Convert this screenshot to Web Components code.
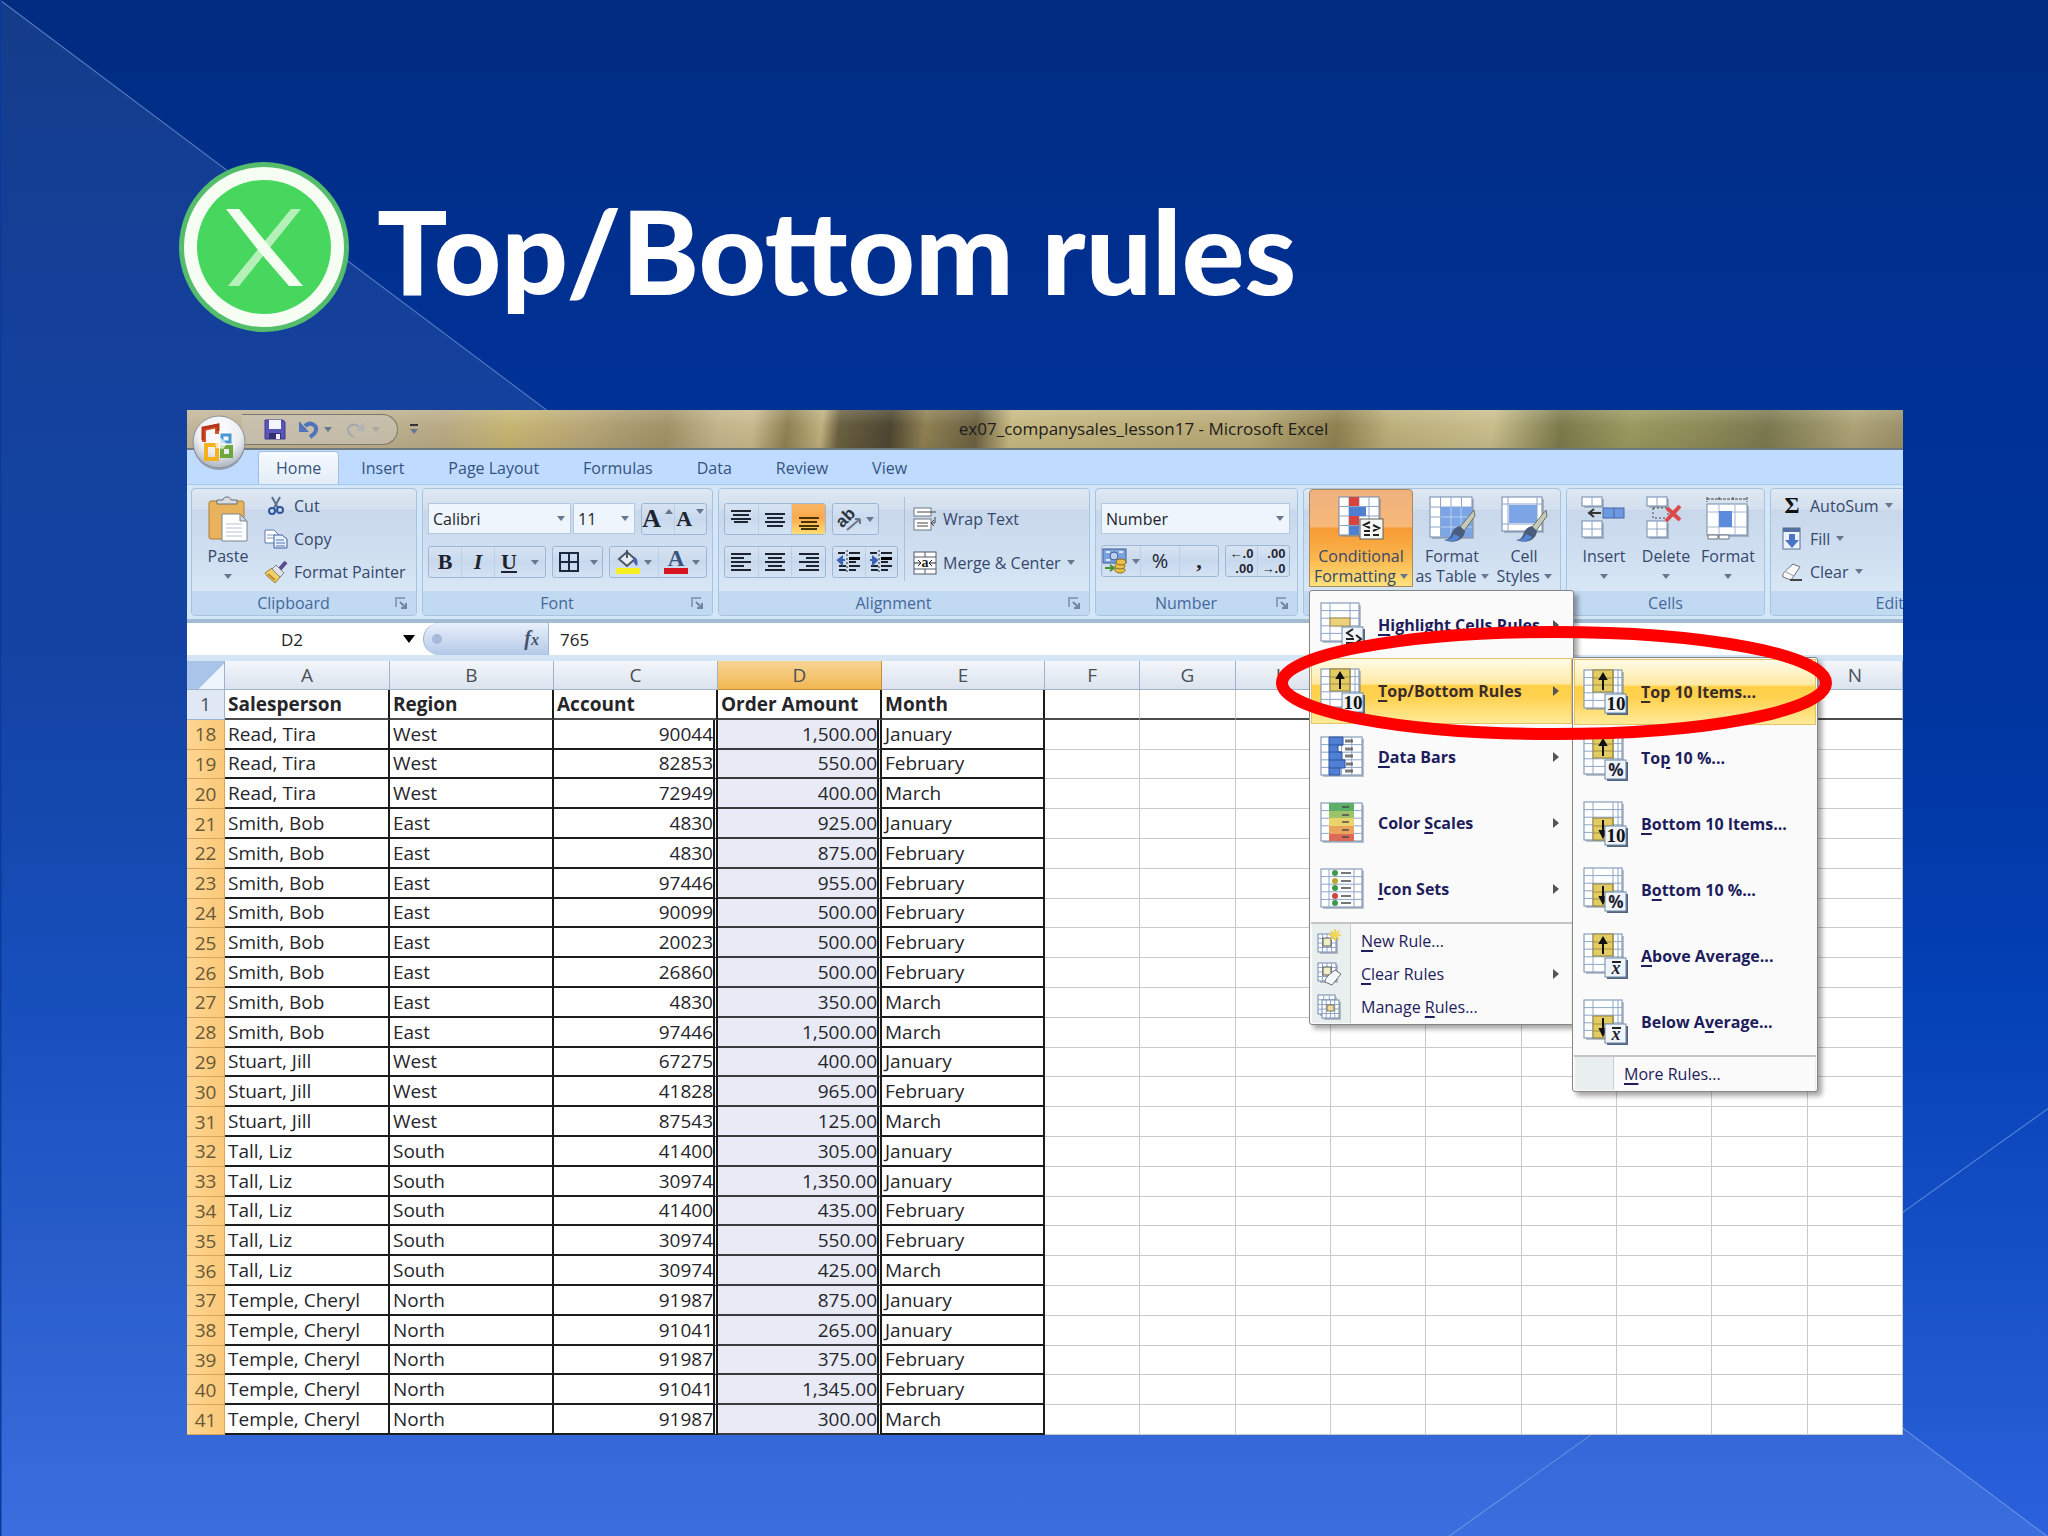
<!DOCTYPE html>
<html lang="en">
<head>
<meta charset="utf-8">
<title>Top/Bottom rules</title>
<style>
body{
  margin: 0;
  min-height: 100vh;
  display: flex;
  font-family: "Open Sans", "Noto Sans", sans-serif;
  font-size: 16px;
  line-height: 20px;
}
</style>
</head>
<body>
<slide-page>
  <slide-title slot="title">Top/Bottom rules</slide-title>
  <excel-window>
    <title-bar slot="bar">ex07_companysales_lesson17 - Microsoft Excel</title-bar>
    <ribbon-tabs slot="bar"></ribbon-tabs>
    <excel-ribbon slot="ribbon"></excel-ribbon>
    <formula-bar slot="sheet" cell="D2" value="765"></formula-bar>
    <sheet-grid slot="sheet"></sheet-grid>
    <red-ring slot="over"></red-ring>
  </excel-window>
</slide-page>

<script>
// small helper, every element below has its own template string
function define(name, html, setup){
  const template = document.createElement('template');
  template.innerHTML = html;
  customElements.define(name, class extends HTMLElement {
    connectedCallback(){
      if (this.shadowRoot) return;
      const shadow = this.attachShadow({mode: 'open'});
      shadow.append(template.content.cloneNode(true));
      if (setup) setup(this, shadow);
    }
  });
}

/* ---------- icons ---------- */
function grid(x, y, w, h, cols, rows, fill){
  let d = '';
  for (let i = 1; i < cols; i++) d += `M${x + w * i / cols} ${y}v${h}`;
  for (let i = 1; i < rows; i++) d += `M${x} ${y + h * i / rows}h${w}`;
  return `<rect x="${x + 2}" y="${y + 2}" width="${w}" height="${h}" fill="#7c8796" opacity=".5"/>
    <rect x="${x}" y="${y}" width="${w}" height="${h}" fill="${fill || '#fff'}" stroke="#7089ad"/>
    <path d="${d}" stroke="#8ea6c8" fill="none"/>`;
}
function badge(inner){
  return `<rect x="24" y="27" width="21" height="19" fill="#52637c"/><rect x="22" y="25" width="21" height="19" fill="#eef4fa" stroke="#6d88a8"/>${inner}`;
}
const badges = {
  ten: badge('<text x="33" y="41" font-size="19" font-weight="700" text-anchor="middle" font-family="Liberation Serif" fill="#111">10</text>'),
  pct: badge('<text x="33" y="41" font-size="17" font-weight="700" text-anchor="middle" font-family="Open Sans" fill="#223">%</text>'),
  avg: badge('<path d="M29 29h9" stroke="#222" stroke-width="2"/><text x="33" y="41" font-size="18" font-style="italic" font-weight="700" text-anchor="middle" font-family="Liberation Serif" fill="#223">x</text>'),
  cmp: badge('<path d="M33 27l-6 4 6 4M26 37h8M26 41h8M36 33l5 4-5 4" stroke="#222" stroke-width="2" fill="none"/>')
};
function ruleIcon(up, b){
  const y = up ? 1 : 17;
  return grid(1, 1, 38, 38, 1, 5) + `<path d="M10 1v38M30 1v38M35 1v38" stroke="#8ea6c8"/><rect x="10" y="${y}" width="20" height="22" fill="#e3cc62" stroke="#8d8043"/>
    <path d="M10 ${y + 8}h20M10 ${y + 15}h20M30 ${y}v22" stroke="#a08f45"/>
    <path d="${up ? 'M20 21V6M17 10l3-5 3 5z' : 'M20 19v14M17 30l3 6 3-6z'}" stroke="#111" stroke-width="2" fill="#111"/>` + badges[b];
}
const brush = '<path d="M45 14L31 31l4 4L46 20z" fill="#c6cbb8" stroke="#69706a"/><path d="M31 30c-6 1-8 6-9 9-1 3-4 5-7 5 9 4 20 1 21-9z" fill="#4b5d7d"/><path d="M16 44c5 0 8-3 9-6l6 3c-4 5-10 5-15 3z" fill="#5485d8"/>';
const lines = (a) => a.map(x => `M${x[0]} ${x[1]}h${x[2]}`).join('');
const ICONS = {
  office: [56, 56, `<defs><radialGradient id="g" cx=".5" cy=".3" r=".7"><stop offset="0" stop-color="#fff"/><stop offset=".6" stop-color="#eceef2"/><stop offset="1" stop-color="#aab3c2"/></radialGradient></defs>
    <circle cx="28" cy="29" r="26" fill="#6d6a60" opacity=".5"/><circle cx="28" cy="27" r="26" fill="url(#g)" stroke="#8c8f96"/>
    <g fill="none" stroke-width="4"><path d="M13 27V14l13-3v8" stroke="#d4542a"/><path d="M12 25V13l15-3v6" stroke="#b5351e" stroke-width="3"/><rect x="31" y="20" width="8" height="7" stroke="#4a97d6" stroke-width="3"/><rect x="15" y="30" width="11" height="14" stroke="#f2b21c"/><rect x="31" y="32" width="9" height="9" stroke="#6ca83c"/></g>
    <path d="M24 26l6-3 6 6-4 5-7-1z" fill="#fff" opacity=".7"/>`],
  save: [22, 21, '<path d="M1 1h18l2 2v17H1z" fill="#5a55b8" stroke="#3d3893"/><rect x="5" y="1" width="12" height="9" fill="#f4f5fd"/><rect x="5" y="14" width="12" height="6" fill="#33306f"/><rect x="12" y="15" width="4" height="5" fill="#f0f0fa"/>'],
  undo: [20, 20, '<path d="M7 7c5-5 12-1 11 4 0 3-3 5-6 7" fill="none" stroke="#4f74bb" stroke-width="4"/><path d="M1 2v11h10z" fill="#4f74bb"/>'],
  redo: [20, 20, '<path d="M13 8C8 3 1 7 2 12c1 3 3 5 6 6" fill="none" stroke="#a4a8ac" stroke-width="2"/><path d="M18 3v9h-8z" fill="#b0b3b6"/>'],
  paste: [42, 46, '<rect x="2" y="5" width="35" height="38" rx="2" fill="#e9b25c" stroke="#a97f3e"/><path d="M10 8V4h6c0-4 8-4 8 0h6v4z" fill="#d8dde3" stroke="#666d76"/><path d="M15 18h18l7 7v20H15z" fill="#fff" stroke="#7a8390"/><path d="M33 18v7h7z" fill="#cad6e6" stroke="#7a8390"/><path d="M19 28h16M19 32h16M19 36h16M19 40h16" stroke="#b4c0d2"/>'],
  cut: [20, 20, '<path d="M6 1l6 11M14 1L8 12" stroke="#5d6f8c" stroke-width="2"/><circle cx="6" cy="15" r="3" fill="none" stroke="#32549a" stroke-width="2"/><circle cx="14" cy="14" r="3" fill="none" stroke="#32549a" stroke-width="2"/>'],
  copy: [24, 20, '<path d="M1 1h9l4 4v9H1z" fill="#fff" stroke="#5c7bb0"/><path d="M3 6h8M3 9h8" stroke="#7e9ccb"/><path d="M10 6h8l5 4v9H10z" fill="#e9f1fd" stroke="#3e5f9c"/><path d="M12 11h8M12 14h9M12 17h9" stroke="#4f76b8"/>'],
  painter: [24, 22, '<path d="M22 1l-7 8" stroke="#5c4a93" stroke-width="4"/><path d="M8 7l9 8-6 7C7 18 3 16 1 12z" fill="#f0cf68" stroke="#9a7a2c"/><path d="M4 13l7 6" stroke="#b98d2d" stroke-width="2"/><path d="M8 8l4-4 8 8-4 4z" fill="#dfe3e8" stroke="#80858c"/>'],
  borders: [22, 22, '<path d="M2 2h18v18H2zM11 2v18M2 11h18" fill="none" stroke="#1c2940" stroke-width="2"/>'],
  bucket: [24, 26, '<path d="M3 10l8-7 8 7-8 7z" fill="#e6ebf2" stroke="#4c5564" stroke-width="2"/><path d="M11 1v8" stroke="#4c5564" stroke-width="2"/><path d="M18 8c4 1 4 6 3 9-3-2-4-4-3-9z" fill="#4d61b5"/><rect x="0" y="19" width="24" height="6" fill="#f7ef24"/>'],
  fontcolor: [24, 26, '<text x="12" y="17" font-family="Liberation Serif" font-size="23" font-weight="700" text-anchor="middle" fill="#38567f">A</text><rect x="0" y="19" width="24" height="6" fill="#d6141d"/>'],
  top: [22, 22, `<path d="${lines([[1, 3, 20], [3, 7, 16], [1, 11, 20], [4, 14, 14]])}" stroke="#1d2430" stroke-width="2"/>`],
  middle: [22, 22, `<path d="${lines([[1, 6, 20], [3, 10, 16], [1, 14, 20], [3, 18, 16]])}" stroke="#1d2430" stroke-width="2"/>`],
  bottom: [22, 22, `<path d="${lines([[1, 10, 20], [3, 14, 16], [1, 18, 20], [3, 21, 16]])}" stroke="#4a3208" stroke-width="2"/>`],
  left: [22, 20, `<path d="${lines([[1, 2, 20], [1, 6, 13], [1, 10, 20], [1, 14, 13], [1, 18, 20]])}" stroke="#1d2430" stroke-width="2"/>`],
  center: [22, 20, `<path d="${lines([[1, 2, 20], [4, 6, 14], [1, 10, 20], [4, 14, 14], [1, 18, 20]])}" stroke="#1d2430" stroke-width="2"/>`],
  right: [22, 20, `<path d="${lines([[1, 2, 20], [8, 6, 13], [1, 10, 20], [8, 14, 13], [1, 18, 20]])}" stroke="#1d2430" stroke-width="2"/>`],
  orient: [24, 22, '<text x="0" y="14" font-family="Liberation Sans" font-size="17" font-weight="700" fill="#2d333d" transform="rotate(-45 10 12)">ab</text><path d="M9 22L22 11M22 11v5M22 11h-5" stroke="#6d7786" stroke-width="2" fill="none"/>'],
  outdent: [24, 24, '<path d="M1 3h7M12 3h11M12 8h11M12 12h7M12 16h11M12 20h7M2 16h7M2 20h7" stroke="#1d2430" stroke-width="2"/><path d="M12 7h11v3H12z"/><path d="M10 0v24" stroke="#333" stroke-dasharray="2 2"/><path d="M8 10H3M5 7l-4 3 4 4z" stroke="#3b63b4" stroke-width="2" fill="#3b63b4"/>'],
  indent: [24, 24, '<path d="M1 3h7M12 3h11M12 8h11M12 12h7M12 16h11M12 20h7M2 16h7M2 20h7" stroke="#1d2430" stroke-width="2"/><path d="M12 7h11v3H12z"/><path d="M10 0v24" stroke="#333" stroke-dasharray="2 2"/><path d="M1 10h5M4 7l4 3-4 4z" stroke="#3b63b4" stroke-width="2" fill="#3b63b4"/>'],
  wrap: [24, 24, '<rect x="1" y="1" width="17" height="8" fill="#fff" stroke="#6d7786"/><rect x="1" y="12" width="17" height="11" fill="#fff" stroke="#6d7786"/><path d="M4 5h19M4 16h11M4 19h11" stroke="#444"/><path d="M22 10v6h-3M21 13l-3 3 3 3" stroke="#444" fill="none"/>'],
  merge: [24, 24, '<rect x="1" y="1" width="22" height="22" fill="#fff" stroke="#505a6a"/><path d="M1 6h22M1 18h22M12 1v5M12 18v5" stroke="#505a6a"/><path d="M1 12h6M23 12h-6M5 9l3 3-3 3M19 9l-3 3 3 3" stroke="#222" fill="none"/><text x="12" y="16" font-family="Liberation Serif" font-size="14" font-weight="700" text-anchor="middle" fill="#222">a</text>'],
  money: [26, 26, '<rect x="1" y="1" width="23" height="14" fill="#7ba3dd" stroke="#3f5f96"/><circle cx="12" cy="8" r="4" fill="#b9d0f0" stroke="#3f5f96"/><path d="M4 4h4M17 4h4M4 12h4" stroke="#dce8fa" stroke-width="2"/><g fill="#e9c04a" stroke="#8d6c16"><ellipse cx="18" cy="22" rx="5" ry="3"/><ellipse cx="18" cy="18" rx="5" ry="3"/><ellipse cx="19" cy="14" rx="5" ry="3"/></g><path d="M3 20h8M8 17l4 3-4 3" stroke="#4c8f2f" stroke-width="2" fill="none"/>'],
  conditional: [46, 44, grid(1, 1, 40, 38, 4, 4) + '<rect x="11" y="1" width="10" height="9" fill="#d9443f"/><rect x="11" y="11" width="17" height="9" fill="#4f7fd0"/><rect x="11" y="20" width="10" height="9" fill="#d9443f"/><rect x="11" y="30" width="10" height="9" fill="#4f7fd0"/><rect x="22" y="23" width="23" height="20" fill="#f4f7f4" stroke="#5b615b"/><path d="M32 26l-6 3 6 3M26 35h6M26 39h6M35 29l6 3-6 3M35 39h6" stroke="#222" stroke-width="2" fill="none"/>'],
  tableformat: [47, 46, grid(1, 1, 42, 40, 4, 4) + '<path d="M12 11h31v30H12z" fill="#7ba5e4"/><path d="M12 21h31M12 31h31M22 11v30M32 11v30" stroke="#b9d0f2"/>' + brush],
  cellstyle: [47, 46, grid(1, 1, 40, 34, 1, 1) + '<path d="M7 1v34M36 1v34M1 8h40M1 28h40" stroke="#8ea6c8"/><rect x="8" y="9" width="28" height="18" fill="#7ba5e4"/>' + brush],
  insert: [46, 44, grid(1, 1, 20, 9, 2, 1) + grid(1, 25, 20, 16, 2, 2) + '<rect x="22" y="12" width="21" height="10" fill="#6e98e0" stroke="#4467a8"/><path d="M33 12v10" stroke="#4467a8"/><path d="M9 17h11M13 13l-5 4 5 4" stroke="#333" fill="none" stroke-width="2"/>'],
  delete: [40, 44, grid(1, 1, 20, 9, 2, 1) + grid(1, 25, 20, 16, 2, 2) + '<rect x="7" y="12" width="15" height="10" fill="none" stroke="#444" stroke-dasharray="2 2"/><path d="M21 12l13 12M34 10L20 25" stroke="#dc4a48" stroke-width="4"/>'],
  format: [46, 44, grid(2, 8, 40, 31, 1, 1) + '<path d="M14 8v31M30 8v31M2 16h40M2 31h40" stroke="#a4b6d0"/><rect x="14" y="15" width="13" height="16" fill="#5c8add"/><path d="M2 3h40M2 1v5M42 1v5M14 1v4M28 1v4" stroke="#444" stroke-dasharray="3 1" fill="none"/><path d="M3 39h10v4H3zM14 39h10v4H14z" fill="#fff" stroke="#66727f"/>'],
  sum: [18, 20, '<text x="9" y="17" font-family="Liberation Serif" font-size="23" font-weight="700" text-anchor="middle" fill="#111">Σ</text>'],
  fill: [22, 23, '<rect x="2" y="1" width="17" height="21" fill="#eef3fb" stroke="#54709e"/><rect x="2" y="1" width="17" height="4" fill="#54709e"/><path d="M8 7h6v6h4l-7 8-7-8h4z" fill="#4a74c8"/>'],
  clear: [22, 20, '<path d="M12 2l7 3-9 13-8-3c-1-3 1-5 10-13z" fill="#f7f7f7" stroke="#6b6f78"/><path d="M5 10l8 4" stroke="#9a9ea8"/><path d="M9 18h12" stroke="#444" stroke-width="2"/>'],
  highlight: [46, 46, grid(1, 1, 38, 38, 1, 5) + '<path d="M10 1v38M30 1v38" stroke="#8ea6c8"/><rect x="10" y="16" width="20" height="8" fill="#ecd27a" stroke="#a08a4a"/>' + badges.cmp],
  topten: [46, 46, ruleIcon(true, 'ten')],
  toppct: [46, 46, ruleIcon(true, 'pct')],
  bottomten: [46, 46, ruleIcon(false, 'ten')],
  bottompct: [46, 46, ruleIcon(false, 'pct')],
  above: [46, 46, ruleIcon(true, 'avg')],
  below: [46, 46, ruleIcon(false, 'avg')],
  databars: [46, 42, grid(1, 1, 41, 38, 4, 5) + '<path d="M9 1h14v8h-5v7h4v8h3v8h-5v7H9z" fill="#4f80d6" stroke="#2f559c"/><path d="M9 9h14M9 16h13M9 24h16M9 32h11" stroke="#2f559c"/><path d="M25 5h8M25 13h8M25 20h8M26 28h7M25 35h8" stroke="#444" stroke-width="3" opacity=".7"/>'],
  scales: [46, 42, grid(1, 1, 41, 38, 1, 5) + '<rect x="9" y="1" width="25" height="8" fill="#5fae68"/><rect x="9" y="9" width="25" height="7" fill="#9cc26a"/><rect x="9" y="16" width="25" height="8" fill="#ead36c"/><rect x="9" y="24" width="25" height="8" fill="#e8a45c"/><rect x="9" y="32" width="25" height="7" fill="#dd6a58"/><path d="M22 5h7M22 13h7M22 20h7M22 28h7M22 35h7" stroke="#444" stroke-width="2" opacity=".7"/>'],
  iconsets: [46, 42, grid(1, 1, 41, 38, 1, 5) + '<path d="M9 1v38M34 1v38" stroke="#8ea6c8"/><circle cx="15" cy="5" r="3" fill="#3d9a4a"/><circle cx="15" cy="13" r="3" fill="#b7a92f"/><circle cx="15" cy="20" r="3" fill="#3d9a4a"/><circle cx="15" cy="28" r="3" fill="#cc4640"/><circle cx="15" cy="35" r="3" fill="#3d9a4a"/><path d="M21 5h10M21 13h10M21 20h10M21 28h10M21 35h10" stroke="#555" stroke-width="2" opacity=".8"/>'],
  newrule: [26, 26, grid(2, 6, 18, 18, 4, 4) + '<rect x="7" y="10" width="8" height="8" fill="#f2efc5" stroke="#555"/><path d="M19 1v12M13 7h12M15 3l8 8M23 3l-8 8" stroke="#f2d65a" stroke-width="2"/>'],
  clearrule: [26, 26, grid(2, 2, 18, 18, 4, 4) + '<rect x="7" y="6" width="8" height="8" fill="#f2efc5" stroke="#555"/><path d="M19 9l6 4-9 11-7-3c0-3 1-5 10-12z" fill="#f5f7f8" stroke="#66727f"/>'],
  manage: [26, 26, grid(2, 1, 17, 19, 3, 4) + grid(6, 6, 17, 18, 4, 4) + '<rect x="11" y="11" width="7" height="6" fill="#f0d9a0" stroke="#775"/>'],
  launcher: [13, 13, '<path d="M1 10V1h9" fill="none" stroke="#8aa0bd" stroke-width="2"/><path d="M5 5l5 5M11 6v5H6" fill="none" stroke="#6f86a6" stroke-width="2"/>']
};

define('xl-icon', `<style>
:host{ display: inline-block; line-height: 0; flex: none; }
svg{ display: block; overflow: visible; }
</style>`, (el, shadow) => {
  const [w, h, body] = ICONS[el.getAttribute('name')];
  shadow.innerHTML += `<svg width="${w}" height="${h}" viewBox="0 0 ${w} ${h}" aria-hidden="true">${body}</svg>`;
});

define('drop-arrow', `<style>
:host{ display: inline-block; flex: none; border: 4px solid transparent; border-top: 5px solid #66788f; border-bottom: 0; }
:host([dark]){ border-width: 6px 6px 0; border-top: 8px solid #000; }
:host([up]){ border-top: 0; border-bottom: 5px solid #66788f; }
</style>`);

/* ---------- slide ---------- */
define('slide-page', `<style>
:host{
  display: block;
  flex: 1;
  min-width: 0;
  position: relative;
  padding: 162px 145px 102px 187px;
  background: linear-gradient(#002c80, #003092 20%, #00359e 45%, #0440b6 65%, #1650c6 82%, #2b62dc);
}
.deco{ position: absolute; inset: 0; width: 100%; height: 100%; }
main{ position: relative; }
</style>
<svg class="deco" viewBox="0 0 2048 1536" preserveAspectRatio="none" aria-hidden="true">
  <path d="M0 0L2048 1536H0z" fill="#fff" opacity=".08"/>
  <path d="M0 0L2048 1536M2048 1108L1448 1536" stroke="#8fb3ee" opacity=".6" fill="none"/>
  <path d="M0 0v1536" stroke="#0a3a9c" stroke-width="3"/>
</svg>
<main><slot name="title"></slot><slot></slot></main>`);

define('slide-title', `<style>
:host{ display: flex; align-items: center; gap: 28px; height: 170px; margin: 0 0 78px -8px; }
h1{ margin: 0; padding-top: 6px; color: #fff; font: 900 117px/140px Lato, sans-serif; white-space: nowrap; }
svg{ flex: none; }
</style>
<svg width="170" height="170" viewBox="0 0 170 170" role="img" aria-label="Excel">
  <circle cx="85" cy="85" r="85" fill="#53bd6c"/>
  <circle cx="85" cy="85" r="80" fill="#f6fdf3"/>
  <circle cx="85" cy="85" r="67" fill="#47d75f"/>
  <path d="M112 47h10L60 124H49z" fill="#b5f0b8"/>
  <path d="M47 47h13l31 38 33 39h-14L79 88z" fill="#f4fff2"/>
</svg>
<h1><slot></slot></h1>`);

define('excel-window', `<style>
:host{ display: block; position: relative; overflow: hidden; background: #fff; }
.ribbon{ position: relative; z-index: 2; }
</style>
<slot name="bar"></slot>
<div class="ribbon"><slot name="ribbon"></slot></div>
<slot name="sheet"></slot>
<slot name="over"></slot>`);

define('title-bar', `<style>
:host{
  display: flex;
  align-items: center;
  height: 38px;
  position: relative;
  z-index: 1;
  border-bottom: 2px solid #6f7a80;
  color: #1d1d1d;
  font-size: 17px;
  background:
    linear-gradient(rgb(255 255 255 / 15%), transparent 40%, rgb(60 50 20 / 8%)),
    linear-gradient(96deg, #c3b79a, #beb292 10%, #b9ab86 15%, #c6b673 19%, #b9a878 23%, #a99a70 26%, #a29368 28%, #c3b58c 31%, #c9b98e 33%, #8f8153 35%, #c0b17f 37%, #6b6142 38%, #4c4530 41%, #8f8153 43%, #6b6142 46%, #c7b982 48%, #b8aa78 62%, #8f8150 67%, #bcb07c 70%, #c9be8c 76%, #7c7a4c 80%, #9a9a60 84%, #8e8c58 88%, #7b7950 92%, #aea377 97%, #9b9069);
}
.office{ position: absolute; left: 4px; top: 5px; border: 0; padding: 0; background: none; }
.qat{
  display: flex;
  align-items: center;
  gap: 12px;
  box-sizing: border-box;
  width: 156px;
  height: 31px;
  margin-left: 55px;
  padding-left: 22px;
  border: 1px solid #7c7768;
  border-left: 0;
  border-radius: 0 16px 16px 0;
  background: rgb(204 198 186 / 60%);
}
button{ display: block; border: 0; padding: 0; background: none; line-height: 0; }
.more{ margin-left: 12px; border-top: 2px solid #333; padding-top: 3px; }
.name{ margin: 0 auto; padding-right: 34px; white-space: nowrap; }
.qat drop-arrow{ margin: 0 2px 0 -6px; }
.off{ opacity: .3; }
</style>
<button class="office" aria-label="Office"><xl-icon name="office"></xl-icon></button>
<div class="qat">
  <button aria-label="Save"><xl-icon name="save"></xl-icon></button>
  <button aria-label="Undo"><xl-icon name="undo"></xl-icon></button><drop-arrow></drop-arrow>
  <button aria-label="Redo"><xl-icon name="redo"></xl-icon></button><drop-arrow class="off"></drop-arrow>
</div>
<button class="more" aria-label="Customize"><drop-arrow></drop-arrow></button>
<div class="name"><slot></slot></div>`);

define('ribbon-tabs', `<style>
:host{ display: flex; align-items: flex-end; height: 34px; padding-left: 71px; background: #bfdbff; border-bottom: 1px solid #a9c9ec; }
button{ font: inherit; color: #35537f; border: 0; background: none; height: 33px; padding: 0 22px; }
.on{ margin: 0; padding: 0 17px; border: 1px solid #a3bfdf; border-bottom: 0; border-radius: 4px 4px 0 0; background: linear-gradient(#f7fafe, #e3edf8); }
</style>`, (el, shadow) => {
  ['Home', 'Insert', 'Page Layout', 'Formulas', 'Data', 'Review', 'View'].forEach((t, i) => {
    const b = document.createElement('button');
    b.textContent = t;
    if (i == 0) b.className = 'on';
    shadow.append(b);
  });
});

/* ---------- ribbon parts ---------- */
define('ribbon-group', `<style>
:host{
  display: flex;
  flex-direction: column;
  flex: none;
  box-sizing: border-box;
  width: var(--w);
  height: 128px;
  border: 1px solid #a8c3de;
  border-radius: 4px;
  background: linear-gradient(#dfe8f3, #d3dfee 16%, #c8d7ea 17%, #d2e1f2 60%, #deecf9);
}
.body{ flex: 1; display: flex; min-height: 0; }
.foot{ display: flex; align-items: center; height: 24px; background: #c1d9f1; color: #45689c; border-radius: 0 0 3px 3px; }
.foot span{ flex: 1; text-align: center; }
.foot button{ border: 0; background: none; padding: 0; line-height: 0; margin: 0 8px 0 0; }
</style>
<div class="body"><slot></slot></div>
<div class="foot"><span></span></div>`, (el, shadow) => {
  shadow.querySelector('span').textContent = el.getAttribute('label');
  if (el.hasAttribute('launcher'))
    shadow.querySelector('.foot').insertAdjacentHTML('beforeend', '<button aria-label="More options"><xl-icon name="launcher"></xl-icon></button>');
});

define('tool-button', `<style>
:host{ display: block; }
button{ display: flex; align-items: center; gap: 6px; height: 33px; padding: 0; border: 0; background: none; font: inherit; color: #35486c; white-space: nowrap; }
.i{ width: 24px; display: flex; justify-content: center; }
</style>
<button><span class="i"></span><slot></slot></button>`, (el, shadow) => {
  shadow.querySelector('.i').innerHTML = `<xl-icon name="${el.getAttribute('icon')}"></xl-icon>`;
  if (el.hasAttribute('arrow')) shadow.querySelector('button').append(document.createElement('drop-arrow'));
});

define('big-button', `<style>
:host{ display: block; position: relative; width: var(--w); }
button{
  display: flex;
  flex-direction: column;
  align-items: center;
  box-sizing: border-box;
  width: 100%;
  height: 98px;
  padding: 6px 0 0;
  border: 1px solid transparent;
  background: none;
  font: inherit;
  color: #35486c;
}
.i{ height: 50px; }
.t, .b{ display: flex; align-items: center; justify-content: center; gap: 4px; height: 20px; white-space: nowrap; }
:host([active]) button{
  border-color: #a88a5c;
  border-radius: 4px 4px 0 0;
  background: linear-gradient(#efb27e, #f7b878 38%, #f79a35 40%, #fbb54c 70%, #fde27c);
}
</style>
<button><span class="i"></span><span class="t"></span><span class="b"><span></span><drop-arrow></drop-arrow></span></button>
<slot></slot>`, (el, shadow) => {
  const [a, b] = el.getAttribute('label').split('|');
  shadow.querySelector('.i').innerHTML = `<xl-icon name="${el.getAttribute('icon')}"></xl-icon>`;
  shadow.querySelector('.t').textContent = a;
  if (b) shadow.querySelector('.b span').textContent = b;
  else shadow.querySelector('.b span').remove();
});

define('button-set', `<style>
:host{ display: flex; box-sizing: border-box; height: 32px; border: 1px solid #9db7d4; border-radius: 3px; background: linear-gradient(#d6e3f3, #c9d9ed 50%, #d3e2f3); }
::slotted(*){ border-left: 1px solid #bccfe5; }
::slotted(:first-child){ border-left: 0; }
</style><slot></slot>`);

define('set-cell', `<style>
:host{ display: block; flex: 1; }
button{ display: flex; align-items: center; justify-content: center; gap: 4px; width: 100%; height: 30px; padding: 0; border: 0; background: none; color: #1d2430; font: 700 22px/24px "Liberation Serif", serif; }
:host([on]) button{ background: linear-gradient(#f8b566, #fba94b 45%, #fede73); }
</style><button><slot></slot></button>`);

define('combo-box', `<style>
:host{ display: grid; box-sizing: border-box; height: 31px; width: var(--w); align-items: center; }
select{ grid-area: 1 / 1; appearance: none; box-sizing: border-box; width: 100%; height: 31px; padding: 0 4px; border: 1px solid #b2cae4; border-radius: 0; background: #eef5fd; font: inherit; color: #1d2430; }
drop-arrow{ grid-area: 1 / 1; justify-self: end; margin-right: 6px; pointer-events: none; }
</style>
<select></select><drop-arrow></drop-arrow>`, (el, shadow) => {
  const s = shadow.querySelector('select');
  s.setAttribute('aria-label', el.getAttribute('label'));
  s.add(new Option(el.getAttribute('value')));
});

define('excel-ribbon', `<style>
:host{ display: flex; gap: 5px; box-sizing: border-box; height: 138px; padding: 3px 0 0 4px; background: #d4e7f9; border-bottom: 4px solid #a3bcd2; }
.col{ display: flex; flex-direction: column; }
.rows{ display: flex; flex-direction: column; gap: 11px; padding: 14px 5px 0; flex: 1; }
.row{ display: flex; gap: 6px; }
.tight{ gap: 2px; }
.flush{ gap: 0; padding-left: 5px; }
.cells{ gap: 0; padding-left: 6px; }
.sep{ width: 1px; height: 84px; margin: 8px 8px 0 0; background: #a9c1dc; }
.al{ flex: none; padding-right: 6px; }
.wide{ gap: 11px; padding-top: 13px; }
.edit{ padding-left: 9px; }
button-set{ width: var(--w); }
.caret{ align-self: flex-start; margin-top: 5px; }
.large{ font-size: 26px; }
.num{ text-align: right; }
.num b{ display: block; font: 700 13px/15px "Liberation Sans", sans-serif; }
.plain{ font: 400 20px/24px "Open Sans", sans-serif; }
i{ font-weight: 700; }
</style>
<ribbon-group label="Clipboard" launcher style="--w: 226px">
  <big-button icon="paste" label="Paste" style="--w: 72px"></big-button>
  <div class="col">
    <tool-button icon="cut">Cut</tool-button>
    <tool-button icon="copy">Copy</tool-button>
    <tool-button icon="painter">Format Painter</tool-button>
  </div>
</ribbon-group>
<ribbon-group label="Font" launcher style="--w: 291px">
  <div class="rows">
    <div class="row tight">
      <combo-box label="Font" value="Calibri" style="--w: 143px"></combo-box>
      <combo-box label="Font size" value="11" style="--w: 62px"></combo-box>
      <button-set style="--w: 66px; margin-left: 4px">
        <set-cell><span class="large">A</span><drop-arrow up class="caret"></drop-arrow></set-cell>
        <set-cell><span>A</span><drop-arrow class="caret"></drop-arrow></set-cell>
      </button-set>
    </div>
    <div class="row">
      <button-set style="--w: 118px"><set-cell>B</set-cell><set-cell><i>I</i></set-cell><set-cell style="flex: 1 1 18px"><u>U</u><drop-arrow style="margin-left: 10px"></drop-arrow></set-cell></button-set>
      <button-set style="--w: 51px"><set-cell><xl-icon name="borders"></xl-icon><drop-arrow style="margin-left: 6px"></drop-arrow></set-cell></button-set>
      <button-set style="--w: 98px"><set-cell><xl-icon name="bucket"></xl-icon><drop-arrow></drop-arrow></set-cell><set-cell><xl-icon name="fontcolor"></xl-icon><drop-arrow></drop-arrow></set-cell></button-set>
    </div>
  </div>
</ribbon-group>
<ribbon-group label="Alignment" launcher style="--w: 372px">
  <div class="rows al">
    <div class="row">
      <button-set style="--w: 102px"><set-cell><xl-icon name="top"></xl-icon></set-cell><set-cell><xl-icon name="middle"></xl-icon></set-cell><set-cell on><xl-icon name="bottom"></xl-icon></set-cell></button-set>
      <button-set style="--w: 47px"><set-cell><xl-icon name="orient"></xl-icon><drop-arrow></drop-arrow></set-cell></button-set>
    </div>
    <div class="row">
      <button-set style="--w: 102px"><set-cell><xl-icon name="left"></xl-icon></set-cell><set-cell><xl-icon name="center"></xl-icon></set-cell><set-cell><xl-icon name="right"></xl-icon></set-cell></button-set>
      <button-set style="--w: 66px"><set-cell><xl-icon name="outdent"></xl-icon></set-cell><set-cell><xl-icon name="indent"></xl-icon></set-cell></button-set>
    </div>
  </div>
  <div class="sep"></div>
  <div class="col wide">
    <tool-button icon="wrap">Wrap Text</tool-button>
    <tool-button icon="merge" arrow>Merge &amp; Center</tool-button>
  </div>
</ribbon-group>
<ribbon-group label="Number" launcher style="--w: 203px">
  <div class="rows">
    <combo-box label="Number format" value="Number" style="--w: 189px"></combo-box>
    <div class="row">
      <button-set style="--w: 118px"><set-cell><xl-icon name="money"></xl-icon><drop-arrow></drop-arrow></set-cell><set-cell><span class="plain">%</span></set-cell><set-cell>,</set-cell></button-set>
      <button-set style="--w: 65px"><set-cell><span class="num"><b>←.0</b><b>.00</b></span></set-cell><set-cell><span class="num"><b>.00</b><b>→.0</b></span></set-cell></button-set>
    </div>
  </div>
</ribbon-group>
<ribbon-group label="Styles" style="--w: 258px">
  <div class="row flush">
    <big-button active icon="conditional" label="Conditional|Formatting" style="--w: 104px"><conditional-menu></conditional-menu></big-button>
    <big-button icon="tableformat" label="Format|as Table" style="--w: 78px"></big-button>
    <big-button icon="cellstyle" label="Cell|Styles" style="--w: 66px"></big-button>
  </div>
</ribbon-group>
<ribbon-group label="Cells" style="--w: 199px">
  <div class="row cells">
    <big-button icon="insert" label="Insert" style="--w: 62px"></big-button>
    <big-button icon="delete" label="Delete" style="--w: 62px"></big-button>
    <big-button icon="format" label="Format" style="--w: 62px"></big-button>
  </div>
</ribbon-group>
<ribbon-group label="Editing" style="--w: 262px">
  <div class="col edit">
    <tool-button icon="sum" arrow>AutoSum</tool-button>
    <tool-button icon="fill" arrow>Fill</tool-button>
    <tool-button icon="clear" arrow>Clear</tool-button>
  </div>
</ribbon-group>`);

/* ---------- menus ---------- */
define('menu-item', `<style>
:host{ display: block; position: relative; }
button{ display: flex; align-items: center; width: 100%; height: 66px; padding: 0 0 0 8px; border: 1px solid transparent; background: none; font: inherit; font-weight: 700; color: #1d1c5c; text-align: left; white-space: nowrap; }
.i{ width: 58px; display: flex; }
.arrow{ margin: 0 12px 0 auto; border: 5px solid transparent; border-left: 6px solid #555; border-right: 0; }
:host([hot]) button{ border-color: #e5c365; background: linear-gradient(#fffbe6, #ffeaa6 38%, #ffcf45 42%, #ffd251 60%, #ffeb9a); color: #3b2c2c; }
:host([small]) button{ height: 33px; padding-left: 4px; font-weight: 400; background: linear-gradient(90deg, #e9eeee 38px, #c9cfd2 38px, #c9cfd2 39px, transparent 39px); }
:host([small]) .i{ width: 45px; }
</style>
<button role="menuitem"><span class="i"></span><span><slot></slot></span></button>
<slot name="sub"></slot>`, (el, shadow) => {
  if (el.hasAttribute('icon')) shadow.querySelector('.i').innerHTML = `<xl-icon name="${el.getAttribute('icon')}"></xl-icon>`;
  if (el.hasAttribute('more')) shadow.querySelector('button').insertAdjacentHTML('beforeend', '<span class="arrow"></span>');
});

define('menu-panel', `<style>
:host{ display: block; position: absolute; box-sizing: border-box; padding: 1px; border: 1px solid #868686; border-radius: 3px; background: #fafafa; box-shadow: 4px 4px 5px rgb(0 0 0 / 35%); }
::slotted(hr){ margin: 0; border: 0; border-top: 2px solid #c5c5c5; }
</style><slot></slot>`);

define('conditional-menu', `<style>
:host{ display: block; }
.main{ top: 101px; left: 0; width: 265px; }
.sub{ top: -1px; left: 261px; width: 246px; }
u{ text-underline-offset: 3px; text-decoration-thickness: 2px; }
</style>
<menu-panel class="main" role="menu">
  <menu-item icon="highlight" more><u>H</u>ighlight Cells Rules</menu-item>
  <menu-item icon="topten" more hot><u>T</u>op/Bottom Rules
    <menu-panel slot="sub" class="sub" role="menu">
      <menu-item icon="topten" hot><u>T</u>op 10 Items...</menu-item>
      <menu-item icon="toppct">To<u>p</u> 10 %...</menu-item>
      <menu-item icon="bottomten"><u>B</u>ottom 10 Items...</menu-item>
      <menu-item icon="bottompct">B<u>o</u>ttom 10 %...</menu-item>
      <menu-item icon="above"><u>A</u>bove Average...</menu-item>
      <menu-item icon="below">Below A<u>v</u>erage...</menu-item>
      <hr>
      <menu-item small><u>M</u>ore Rules...</menu-item>
    </menu-panel>
  </menu-item>
  <menu-item icon="databars" more><u>D</u>ata Bars</menu-item>
  <menu-item icon="scales" more>Color <u>S</u>cales</menu-item>
  <menu-item icon="iconsets" more><u>I</u>con Sets</menu-item>
  <hr>
  <menu-item small icon="newrule"><u>N</u>ew Rule...</menu-item>
  <menu-item small icon="clearrule" more><u>C</u>lear Rules</menu-item>
  <menu-item small icon="manage">Manage <u>R</u>ules...</menu-item>
</menu-panel>`);

/* ---------- sheet ---------- */
define('formula-bar', `<style>
:host{ display: flex; align-items: center; box-sizing: border-box; height: 38px; border-bottom: 6px solid #d4e5f5; background: #fff; font-size: 17px; }
input{ border: 0; padding: 0; background: none; font: inherit; color: #222; height: 30px; min-width: 0; }
.name{ width: 210px; text-align: center; }
drop-arrow{ margin-left: 6px; }
.fx{ display: flex; align-items: center; justify-content: space-between; box-sizing: border-box; align-self: stretch; width: 126px; margin-left: 8px; padding: 0 9px 0 8px; border: 1px solid #9db4d2; border-width: 0 1px 0 1px; border-radius: 18px 0 0 18px; background: linear-gradient(#e8f0fb, #b4c9e8); font: italic 700 20px/24px "Liberation Serif", serif; color: #44526b; }
.dot{ width: 10px; height: 10px; border-radius: 5px; background: #a5b9d8; }
small{ font-size: 16px; }
.value{ flex: 1; margin-left: 11px; }
</style>
<input class="name" aria-label="Name box">
<drop-arrow dark></drop-arrow>
<div class="fx"><span class="dot"></span><span>f<small>x</small></span></div>
<input class="value" aria-label="Formula">`, (el, shadow) => {
  shadow.querySelector('.name').value = el.getAttribute('cell');
  shadow.querySelector('.value').value = el.getAttribute('value');
});

const ROWS = `Read, Tira|West|90044|1,500.00|January
Read, Tira|West|82853|550.00|February
Read, Tira|West|72949|400.00|March
Smith, Bob|East|4830|925.00|January
Smith, Bob|East|4830|875.00|February
Smith, Bob|East|97446|955.00|February
Smith, Bob|East|90099|500.00|February
Smith, Bob|East|20023|500.00|February
Smith, Bob|East|26860|500.00|February
Smith, Bob|East|4830|350.00|March
Smith, Bob|East|97446|1,500.00|March
Stuart, Jill|West|67275|400.00|January
Stuart, Jill|West|41828|965.00|February
Stuart, Jill|West|87543|125.00|March
Tall, Liz|South|41400|305.00|January
Tall, Liz|South|30974|1,350.00|January
Tall, Liz|South|41400|435.00|February
Tall, Liz|South|30974|550.00|February
Tall, Liz|South|30974|425.00|March
Temple, Cheryl|North|91987|875.00|January
Temple, Cheryl|North|91041|265.00|January
Temple, Cheryl|North|91987|375.00|February
Temple, Cheryl|North|91041|1,345.00|February
Temple, Cheryl|North|91987|300.00|March`.split('\n').map(r => r.split('|'));

define('sheet-grid', `<style>
:host{ display: block; font-size: 19px; line-height: 24px; color: #26262a; }
table{ width: 100%; height: 774px; table-layout: fixed; border-collapse: separate; border-spacing: 0; background: #fff; }
th, td{ box-sizing: border-box; height: 29px; padding: 0 2px 0 3px; overflow: hidden; white-space: nowrap; border: 0 solid #c9c9ce; border-width: 0 1px 1px 0; text-align: left; }
thead th{ padding: 0; text-align: center; font-weight: 400; color: #4a4f58; background: linear-gradient(#f3f6fa, #dbe3ee); border-color: #9fb3cb; }
thead th.on{ background: linear-gradient(#f8d596, #f1b751); border-color: #c98f35; }
thead .corner{ background: linear-gradient(135deg, #a9c4e9 60%, #eef4fb 61%); }
tbody th{ padding: 0; text-align: center; font-weight: 400; color: #6a5836; background: linear-gradient(90deg, #fdd692, #fbc878); border-color: #d9a55a; }
tbody tr:first-child th:first-child{ color: #4a4f58; background: #dfe8f3; border-color: #9fb3cb; }
td.a{ border-color: #1c1c1c; border-width: 0 2px 2px 0; }
td.c, td.d{ border-right: 5px double #1c1c1c; }
tr:not(:first-child) td.c, tr:not(:first-child) td.d{ text-align: right; padding: 0; }
tr:not(:first-child) td.d{ background: #e8eaf6; background-clip: padding-box; border-bottom-color: #3a3a3e; }
tr:first-child td{ font-weight: 700; border-bottom: 2px solid #4c4c4c; }
tr:first-child td.c, tr:first-child td.d{ border-right: 2px solid #1c1c1c; }
</style>
<table>
<colgroup><col style="width: 38px"><col style="width: 165px"><col style="width: 164px"><col style="width: 164px"><col style="width: 164px"><col style="width: 163px"></colgroup>
<thead></thead><tbody></tbody>
</table>`, (el, shadow) => {
  const cols = 'ABCDEFGH'.split('').concat('', '', '', '', '', 'N');
  shadow.querySelector('thead').innerHTML = '<tr><th class="corner"></th>' +
    cols.map(c => `<th${c == 'D' ? ' class="on"' : ''}>${c}</th>`).join('') + '</tr>';
  const row = (n, data) => `<tr><th>${n}</th>` +
    cols.map((c, i) => i < 5 ? `<td class="a ${c.toLowerCase()}">${data[i]}</td>` : '<td></td>').join('') + '</tr>';
  shadow.querySelector('tbody').innerHTML = row(1, ['Salesperson', 'Region', 'Account', 'Order Amount', 'Month']) +
    ROWS.map((r, i) => row(i + 18, r)).join('');
});

// annotation that lies over both menus
define('red-ring', `<style>
:host{ position: absolute; z-index: 3; left: 1089px; top: 216px; pointer-events: none; }
svg{ display: block; }
</style>
<svg width="556" height="114" viewBox="0 0 556 114" aria-hidden="true"><ellipse cx="278" cy="57" rx="272" ry="51" fill="none" stroke="#fe0000" stroke-width="12"/></svg>`);
</script>
</body>
</html>
